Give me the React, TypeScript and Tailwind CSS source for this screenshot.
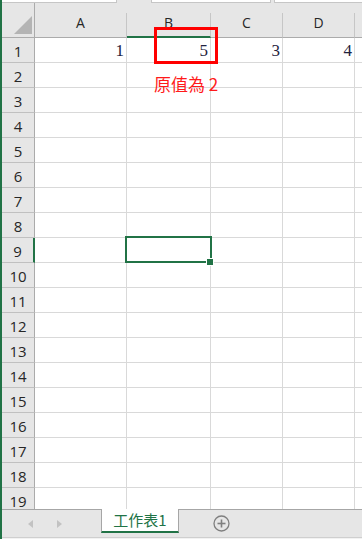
import React from "react";

const cols = [
  { label: "A", w: "w-[92px]", value: "1" },
  { label: "B", w: "w-[84px]", value: "5", selected: true },
  { label: "C", w: "w-[72px]", value: "3" },
  { label: "D", w: "w-[72px]", value: "4" },
];

export default function App() {
  const rows = Array.from({ length: 19 }, (_, i) => i + 1);
  return (
    <div
      className="relative w-[362px] h-[539px] overflow-hidden bg-white flex"
      style={{ fontFamily: '"Open Sans", "Noto Sans", sans-serif' }}
    >
      {/* left green edge */}
      <div className="w-[2px] h-full bg-[#217346] shrink-0" />

      <div className="flex-1 flex flex-col min-w-0">
        {/* top strip */}
        <div className="h-[3px] flex bg-[#e6e6e6] shrink-0">
          <div className="w-[115px] h-full bg-white border-b border-r border-[#c6c6c6]" />
          <div className="w-[34px]" />
          <div className="w-[120px] h-full bg-white border-b border-l border-r border-[#c6c6c6]" />
          <div className="w-[3px]" />
          <div className="flex-1 h-full bg-white border-b border-l border-[#c6c6c6]" />
        </div>

        {/* column header */}
        <div className="h-[35px] flex bg-[#e6e6e6] shrink-0">
          <div className="w-[33px] h-full border-b border-r border-[#ababab] relative shrink-0">
            <svg className="absolute left-[12px] top-[13px]" width="18" height="18" viewBox="0 0 18 18">
              <polygon points="18,0 18,18 0,18" fill="#b4b4b4" />
            </svg>
          </div>
          {cols.map((c) => (
            <div key={c.label} className={`${c.w} h-full flex flex-col shrink-0`}>
              <div className="h-[10px]" />
              <div
                className={`flex-1 flex justify-center text-[14px] leading-[19px] text-[#262626] border-r border-[#c6c6c6] ${
                  c.selected ? "border-b-2 border-b-[#217346]" : "border-b border-b-[#ababab]"
                }`}
              >
                {c.label}
              </div>
            </div>
          ))}
          <div className="flex-1 h-full flex flex-col">
            <div className="h-[10px]" />
            <div className="flex-1 border-b border-[#ababab]" />
          </div>
        </div>

        {/* body */}
        <div className="flex-1 overflow-hidden min-h-0">
          {rows.map((r) => (
            <div key={r} className="h-[25px] flex shrink-0">
              <div
                className={`w-[33px] h-full shrink-0 bg-[#e6e6e6] flex justify-center pt-[2px] text-[15px] leading-[22px] text-[#262626] border-b border-b-[#c0c0c0] ${
                  r === 9 ? "border-r-2 border-r-[#217346]" : "border-r border-r-[#ababab]"
                }`}
              >
                {r}
              </div>
              {cols.map((c) => (
                <div
                  key={c.label}
                  className={`${c.w} h-full shrink-0 border-r border-b border-[#d9d9d9] flex justify-end pr-[2px] pt-[1px] text-[17px] leading-[24px] text-[#1f2340]`}
                  style={{ fontFamily: '"Liberation Serif", "Times New Roman", serif' }}
                >
                  {r === 1 ? c.value : ""}
                </div>
              ))}
              <div className="flex-1 h-full border-b border-[#d9d9d9]" />
            </div>
          ))}
        </div>

        {/* sheet tabs */}
        <div className="h-[30px] flex flex-col shrink-0">
          <div className="h-[28px] flex bg-[#e6e6e6]">
            <div className="w-[99px] h-full border-t border-[#a6a6a6] flex items-center">
              <svg className="ml-[26px]" width="5" height="8" viewBox="0 0 5 8">
                <polygon points="5,0 5,8 0,4" fill="#c2c2c2" />
              </svg>
              <svg className="ml-[24px]" width="5" height="8" viewBox="0 0 5 8">
                <polygon points="0,0 0,8 5,4" fill="#c2c2c2" />
              </svg>
            </div>
            <div className="w-[78px] h-[24px] bg-white border-l border-r border-[#a6a6a6] border-b-2 border-b-[#217346] flex justify-center items-center">
              <span
                className="text-[15px] leading-[20px] text-[#217346]"
                style={{ fontFamily: '"Noto Sans CJK TC", "Noto Sans", sans-serif' }}
              >
                工作表1
              </span>
            </div>
            <div className="flex-1 h-full border-t border-[#a6a6a6] flex items-start">
              <svg className="ml-[34px] mt-[5px]" width="17" height="17" viewBox="0 0 17 17">
                <circle cx="8.5" cy="8.5" r="7.5" fill="none" stroke="#7f7f7f" strokeWidth="1.3" />
                <line x1="8.5" y1="4.5" x2="8.5" y2="12.5" stroke="#7f7f7f" strokeWidth="1.6" />
                <line x1="4.5" y1="8.5" x2="12.5" y2="8.5" stroke="#7f7f7f" strokeWidth="1.6" />
              </svg>
            </div>
          </div>
          <div className="h-[2px] bg-[#f2f2f2] border-t border-[#cfcfcf]" />
        </div>
      </div>

      {/* selected cell B9 */}
      <div className="absolute left-[125px] top-[236px] w-[87px] h-[27px] border-2 border-[#217346]" />
      <div className="absolute left-[206px] top-[258px] w-[8px] h-[8px] bg-[#217346] border border-white" />

      {/* red annotation */}
      <div className="absolute left-[154px] top-[27px] w-[64px] h-[37px] border-[3px] border-[#ff0000]" />
      <div
        className="absolute left-[154px] top-[73px] text-[17px] leading-[22px] text-[#ff1a1a] whitespace-nowrap"
        style={{ fontFamily: '"Noto Sans CJK TC", "Noto Sans", sans-serif' }}
      >
        原值為 2
      </div>
    </div>
  );
}
